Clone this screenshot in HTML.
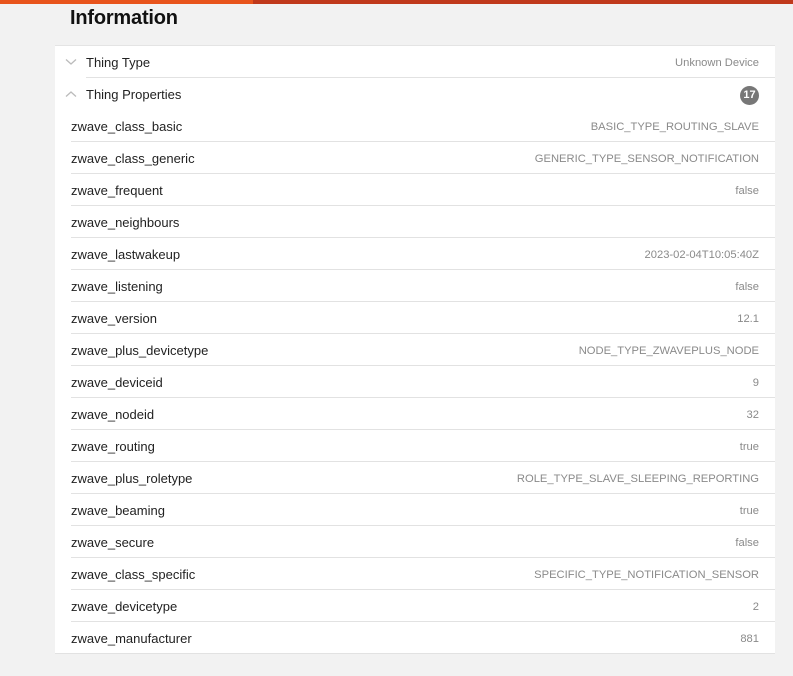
<!DOCTYPE html>
<html><head><meta charset="utf-8"><style>
body{margin:0;width:793px;height:676px;background:#f2f2f2;font-family:"Liberation Sans",sans-serif;overflow:hidden;position:relative}
.bar1{position:absolute;left:0;top:0;width:253px;height:4px;background:#e8541c}
.bar2{position:absolute;left:253px;top:0;width:540px;height:4px;background:#c0391c}
h1{position:absolute;left:70px;top:7px;margin:0;font-size:20px;font-weight:bold;color:#111;letter-spacing:-0.2px}
.card{position:absolute;left:55px;top:45px;width:720px;height:608px;background:#fff;border-top:1px solid #e4e4e4}
.row{position:relative;height:32px;font-size:13px;color:#222}
.row .l{position:absolute;left:16px;top:9px}
.row .r{position:absolute;right:16px;top:11px;color:#8a8a8a;font-size:11.2px}
.row .sep{position:absolute;left:16px;right:0;bottom:0;height:1px;background:#e2e2e2}
.hd .l{left:31px}
.hd .sep{left:31px}
.chev{position:absolute;left:10px;top:12px}
.badge{position:absolute;right:16px;top:8px;width:19px;height:19px;border-radius:50%;background:#777;color:#fff;font-size:11px;font-weight:bold;text-align:center;line-height:19px}
</style></head><body>
<div class="bar1"></div><div class="bar2"></div>
<h1>Information</h1>
<div class="card">
<div class="row hd"><svg class="chev" width="12" height="8"><path d="M1 1.5L6 6L11 1.5" fill="none" stroke="#bbb" stroke-width="1.3"/></svg><span class="l">Thing Type</span><span class="r">Unknown Device</span><div class="sep"></div></div>
<div class="row hd"><svg class="chev" width="12" height="8"><path d="M1 6.5L6 2L11 6.5" fill="none" stroke="#bbb" stroke-width="1.3"/></svg><span class="l">Thing Properties</span><span class="badge">17</span></div>
<div class="row"><span class="l">zwave_class_basic</span><span class="r">BASIC_TYPE_ROUTING_SLAVE</span><div class="sep"></div></div>
<div class="row"><span class="l">zwave_class_generic</span><span class="r">GENERIC_TYPE_SENSOR_NOTIFICATION</span><div class="sep"></div></div>
<div class="row"><span class="l">zwave_frequent</span><span class="r">false</span><div class="sep"></div></div>
<div class="row"><span class="l">zwave_neighbours</span><span class="r"></span><div class="sep"></div></div>
<div class="row"><span class="l">zwave_lastwakeup</span><span class="r">2023-02-04T10:05:40Z</span><div class="sep"></div></div>
<div class="row"><span class="l">zwave_listening</span><span class="r">false</span><div class="sep"></div></div>
<div class="row"><span class="l">zwave_version</span><span class="r">12.1</span><div class="sep"></div></div>
<div class="row"><span class="l">zwave_plus_devicetype</span><span class="r">NODE_TYPE_ZWAVEPLUS_NODE</span><div class="sep"></div></div>
<div class="row"><span class="l">zwave_deviceid</span><span class="r">9</span><div class="sep"></div></div>
<div class="row"><span class="l">zwave_nodeid</span><span class="r">32</span><div class="sep"></div></div>
<div class="row"><span class="l">zwave_routing</span><span class="r">true</span><div class="sep"></div></div>
<div class="row"><span class="l">zwave_plus_roletype</span><span class="r">ROLE_TYPE_SLAVE_SLEEPING_REPORTING</span><div class="sep"></div></div>
<div class="row"><span class="l">zwave_beaming</span><span class="r">true</span><div class="sep"></div></div>
<div class="row"><span class="l">zwave_secure</span><span class="r">false</span><div class="sep"></div></div>
<div class="row"><span class="l">zwave_class_specific</span><span class="r">SPECIFIC_TYPE_NOTIFICATION_SENSOR</span><div class="sep"></div></div>
<div class="row"><span class="l">zwave_devicetype</span><span class="r">2</span><div class="sep"></div></div>
<div class="row"><span class="l">zwave_manufacturer</span><span class="r">881</span><div class="sep" style="left:0"></div></div>
</div>
</body></html>
